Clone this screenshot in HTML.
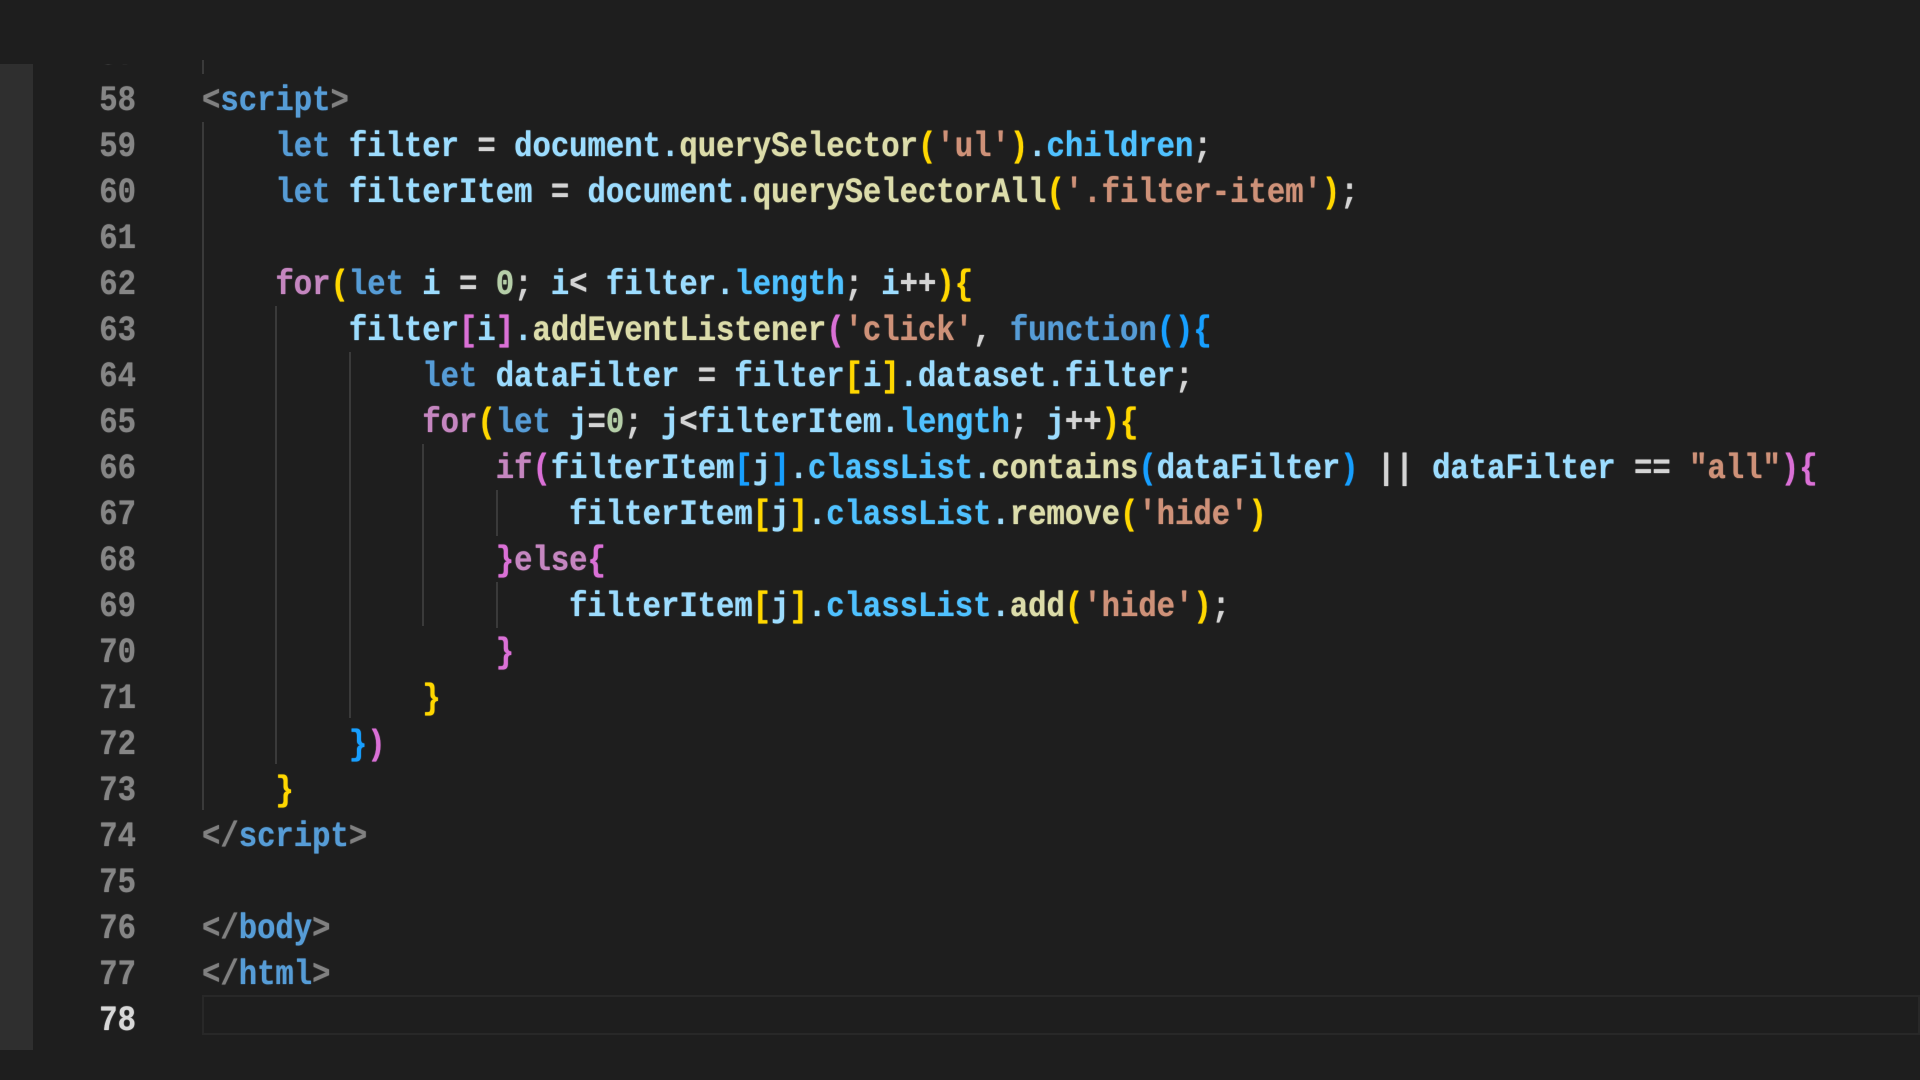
<!DOCTYPE html>
<html><head><meta charset="utf-8"><style>
html,body{margin:0;padding:0;background:#1e1e1e;width:1920px;height:1080px;overflow:hidden}
.strip{position:absolute;left:0;top:64px;width:33px;height:986px;background:#2f2f2f}
.cur{position:absolute;left:202px;top:995px;width:1718px;height:40px;border:2px solid #282828;box-sizing:border-box}
.ln{position:absolute;left:60px;width:76px;text-align:right;color:#858585}
.code{position:absolute;left:202px;white-space:pre;color:#9cdcfe}
.ln,.code{font-family:"Liberation Mono",monospace;font-size:30.6px;font-weight:bold;height:46px;line-height:46px;margin-top:3px;transform:scaleY(1.15);transform-origin:0 50%;text-shadow:0 0 1px currentColor}
.ln{transform-origin:100% 50%}
.g{position:absolute;width:2px;background:#3a3a3a}
.t{color:#808080}.tn{color:#569cd6}.k{color:#569cd6}.c{color:#c586c0}.f{color:#dcdcaa}.s{color:#ce9178}.n{color:#b5cea8}.p{color:#4fc1ff}.w{color:#d4d4d4}
.Y{color:#ffd700}.P{color:#da70d6}.B{color:#179fff}
</style></head><body>
<div class="strip"></div>
<div class="cur"></div>
<div class="g" style="left:202px;top:60px;height:14px"></div>
<div class="g" style="left:202px;top:122px;height:688px"></div>
<div class="g" style="left:275px;top:306px;height:458px"></div>
<div class="g" style="left:349px;top:352px;height:366px"></div>
<div class="g" style="left:422px;top:444px;height:182px"></div>
<div class="g" style="left:496px;top:490px;height:46px"></div>
<div class="g" style="left:496px;top:582px;height:46px"></div>

<div class="ln" style="top:30px;opacity:.5">57</div>
<div class="ln" style="top:76px">58</div><div class="code" style="top:76px"><span class="t">&lt;</span><span class="tn">script</span><span class="t">&gt;</span></div>
<div class="ln" style="top:122px">59</div><div class="code" style="top:122px">    <span class="k">let</span> filter <span class="w">=</span> document.<span class="f">querySelector</span><span class="Y">(</span><span class="s">'ul'</span><span class="Y">)</span>.<span class="p">children</span><span class="w">;</span></div>
<div class="ln" style="top:168px">60</div><div class="code" style="top:168px">    <span class="k">let</span> filterItem <span class="w">=</span> document.<span class="f">querySelectorAll</span><span class="Y">(</span><span class="s">'.filter-item'</span><span class="Y">)</span><span class="w">;</span></div>
<div class="ln" style="top:214px">61</div>
<div class="ln" style="top:260px">62</div><div class="code" style="top:260px">    <span class="c">for</span><span class="Y">(</span><span class="k">let</span> i <span class="w">=</span> <span class="n">0</span><span class="w">;</span> i<span class="w">&lt;</span> filter.<span class="p">length</span><span class="w">;</span> i<span class="w">++</span><span class="Y">){</span></div>
<div class="ln" style="top:306px">63</div><div class="code" style="top:306px">        filter<span class="P">[</span>i<span class="P">]</span>.<span class="f">addEventListener</span><span class="P">(</span><span class="s">'click'</span><span class="w">,</span> <span class="k">function</span><span class="B">(){</span></div>
<div class="ln" style="top:352px">64</div><div class="code" style="top:352px">            <span class="k">let</span> dataFilter <span class="w">=</span> filter<span class="Y">[</span>i<span class="Y">]</span>.dataset.filter<span class="w">;</span></div>
<div class="ln" style="top:398px">65</div><div class="code" style="top:398px">            <span class="c">for</span><span class="Y">(</span><span class="k">let</span> j<span class="w">=</span><span class="n">0</span><span class="w">;</span> j<span class="w">&lt;</span>filterItem.<span class="p">length</span><span class="w">;</span> j<span class="w">++</span><span class="Y">){</span></div>
<div class="ln" style="top:444px">66</div><div class="code" style="top:444px">                <span class="c">if</span><span class="P">(</span>filterItem<span class="B">[</span>j<span class="B">]</span>.<span class="p">classList</span>.<span class="f">contains</span><span class="B">(</span>dataFilter<span class="B">)</span> <span class="w">||</span> dataFilter <span class="w">==</span> <span class="s">"all"</span><span class="P">){</span></div>
<div class="ln" style="top:490px">67</div><div class="code" style="top:490px">                    filterItem<span class="Y">[</span>j<span class="Y">]</span>.<span class="p">classList</span>.<span class="f">remove</span><span class="Y">(</span><span class="s">'hide'</span><span class="Y">)</span></div>
<div class="ln" style="top:536px">68</div><div class="code" style="top:536px">                <span class="P">}</span><span class="c">else</span><span class="P">{</span></div>
<div class="ln" style="top:582px">69</div><div class="code" style="top:582px">                    filterItem<span class="Y">[</span>j<span class="Y">]</span>.<span class="p">classList</span>.<span class="f">add</span><span class="Y">(</span><span class="s">'hide'</span><span class="Y">)</span><span class="w">;</span></div>
<div class="ln" style="top:628px">70</div><div class="code" style="top:628px">                <span class="P">}</span></div>
<div class="ln" style="top:674px">71</div><div class="code" style="top:674px">            <span class="Y">}</span></div>
<div class="ln" style="top:720px">72</div><div class="code" style="top:720px">        <span class="B">}</span><span class="P">)</span></div>
<div class="ln" style="top:766px">73</div><div class="code" style="top:766px">    <span class="Y">}</span></div>
<div class="ln" style="top:812px">74</div><div class="code" style="top:812px"><span class="t">&lt;/</span><span class="tn">script</span><span class="t">&gt;</span></div>
<div class="ln" style="top:858px">75</div>
<div class="ln" style="top:904px">76</div><div class="code" style="top:904px"><span class="t">&lt;/</span><span class="tn">body</span><span class="t">&gt;</span></div>
<div class="ln" style="top:950px">77</div><div class="code" style="top:950px"><span class="t">&lt;/</span><span class="tn">html</span><span class="t">&gt;</span></div>
<div class="ln" style="top:996px;color:#d8d8d8">78</div>
<div style="position:absolute;left:0;top:1050px;width:1920px;height:30px;background:#1e1e1e"></div>
<div style="position:absolute;left:0;top:0;width:1920px;height:64px;background:#1e1e1e"></div>
<div class="g" style="left:202px;top:60px;height:10px"></div>
</body></html>
